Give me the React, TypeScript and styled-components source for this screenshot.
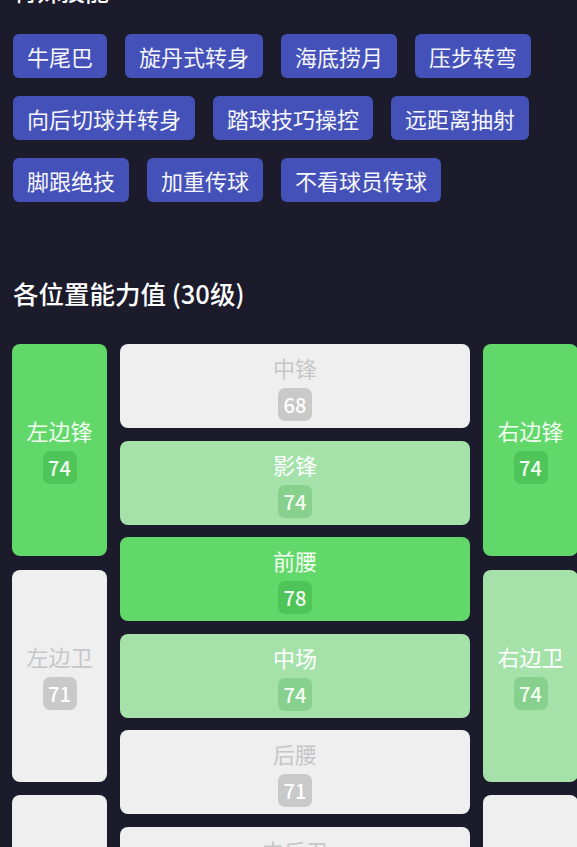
import React from 'react'
import styled, { createGlobalStyle } from 'styled-components'

type Tone = 'strong' | 'mid' | 'weak'

interface Pos {
    name: string,
    value: number,
    tone: Tone,
}

const skills = [
    '牛尾巴', '旋丹式转身', '海底捞月', '压步转弯',
    '向后切球并转身', '踏球技巧操控', '远距离抽射',
    '脚跟绝技', '加重传球', '不看球员传球',
]

const leftSide: Pos[] = [
    { name: '左边锋', value: 74, tone: 'strong' },
    { name: '左边卫', value: 71, tone: 'weak' },
    { name: '', value: 0, tone: 'weak' },
]

const center: Pos[] = [
    { name: '中锋', value: 68, tone: 'weak' },
    { name: '影锋', value: 74, tone: 'mid' },
    { name: '前腰', value: 78, tone: 'strong' },
    { name: '中场', value: 74, tone: 'mid' },
    { name: '后腰', value: 71, tone: 'weak' },
    { name: '中后卫', value: 70, tone: 'weak' },
]

const rightSide: Pos[] = [
    { name: '右边锋', value: 74, tone: 'strong' },
    { name: '右边卫', value: 74, tone: 'mid' },
    { name: '', value: 0, tone: 'weak' },
]

const palette = {
    strong: { bg: '#63d86a', badge: '#4fc459', text: '#f2fff2', num: '#f2fff2' },
    mid: { bg: '#a4e2aa', badge: '#87d08e', text: '#ffffff', num: '#f4fff4' },
    weak: { bg: '#efeff0', badge: '#c9c9c9', text: '#c6c6c6', num: '#ffffff' },
}

const GlobalStyle = createGlobalStyle`
    html, body {
        margin: 0;
        padding: 0;
        background: #1b1b2b;
        overflow: hidden;
    }
    body {
        font-family: "Noto Sans CJK SC", "Noto Sans", sans-serif;
        color: #ffffff;
    }
`

const PosCell = ({ pos, tall }: { pos: Pos, tall?: boolean }) => (
    <Cell $tone={pos.tone} $tall={tall}>
        {pos.name && (
            <>
                <CellName $tone={pos.tone}>{pos.name}</CellName>
                <Badge $tone={pos.tone}>{pos.value}</Badge>
            </>
        )}
    </Cell>
)

const App: React.FC = () => {
    return (
        <Page>
            <GlobalStyle />
            <SectionTitle>
                特殊技能
                <InfoIcon viewBox="0 0 20 20">
                    <circle cx="10" cy="10" r="8" fill="none" stroke="#fff" strokeWidth="2" />
                    <rect x="9" y="8" width="2" height="6" fill="#fff" />
                    <rect x="9" y="5" width="2" height="2" fill="#fff" />
                </InfoIcon>
            </SectionTitle>
            <Tags>
                {skills.map(s => <Tag key={s}>{s}</Tag>)}
            </Tags>
            <Heading>各位置能力值 (30级)</Heading>
            <Pitch>
                <SideColumn>
                    {leftSide.map((p, i) => <PosCell key={i} pos={p} tall />)}
                </SideColumn>
                <CenterColumn>
                    {center.map((p, i) => <PosCell key={i} pos={p} />)}
                </CenterColumn>
                <SideColumn>
                    {rightSide.map((p, i) => <PosCell key={i} pos={p} tall />)}
                </SideColumn>
            </Pitch>
        </Page>
    )
}

export default App

const Page = styled.div`
    margin-top: -24px;
    padding: 0 0 0 13px;
    width: 577px;
    box-sizing: border-box;
`

const SectionTitle = styled.div`
    display: flex;
    align-items: center;
    gap: 10px;
    height: 30px;
    font-size: 24px;
    font-weight: 500;
    line-height: 30px;
`

const InfoIcon = styled.svg`
    width: 18px;
    height: 18px;
`

const Tags = styled.div`
    display: flex;
    flex-wrap: wrap;
    gap: 18px;
    margin-top: 28px;
    padding-right: 20px;
`

const Tag = styled.div`
    height: 44px;
    line-height: 44px;
    padding: 0 14px;
    border-radius: 6px;
    background: #4451b8;
    color: #f6f6ff;
    font-size: 22px;
    white-space: nowrap;
`

const Heading = styled.div`
    margin-top: 74px;
    height: 34px;
    line-height: 34px;
    font-size: 25.5px;
    font-weight: 500;
`

const Pitch = styled.div`
    display: grid;
    grid-template-columns: 95px 350px 95px;
    column-gap: 13px;
    margin-top: 34px;
    margin-left: -1px;
    align-items: start;
`

const SideColumn = styled.div`
    display: flex;
    flex-direction: column;
    gap: 13.5px;
`

const CenterColumn = styled.div`
    display: flex;
    flex-direction: column;
    gap: 12.5px;
`

const Cell = styled.div<{ $tone: Tone, $tall?: boolean }>`
    height: ${p => (p.$tall ? '212px' : '84px')};
    border-radius: 8px;
    background: ${p => palette[p.$tone].bg};
    display: flex;
    flex-direction: column;
    align-items: center;
    justify-content: center;
    gap: 7px;
    padding-top: ${p => (p.$tall ? '0' : '2px')};
    box-sizing: border-box;
`

const CellName = styled.div<{ $tone: Tone }>`
    font-size: 22px;
    line-height: 28px;
    color: ${p => palette[p.$tone].text};
`

const Badge = styled.div<{ $tone: Tone }>`
    width: 34px;
    height: 33px;
    border-radius: 7px;
    background: ${p => palette[p.$tone].badge};
    color: ${p => palette[p.$tone].num};
    font-size: 20px;
    font-weight: 500;
    line-height: 33px;
    text-align: center;
`
